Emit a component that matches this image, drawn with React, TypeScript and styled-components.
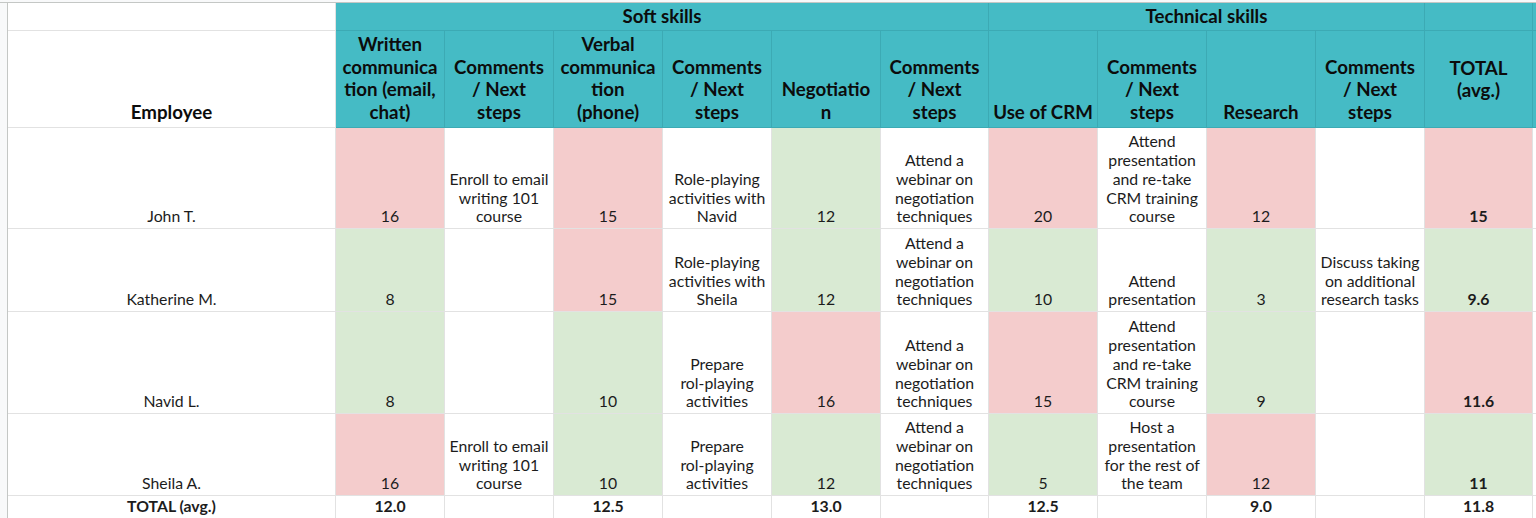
import React from "react";
import styled, { createGlobalStyle, css } from "styled-components";

const GlobalStyle = createGlobalStyle`
  html, body { margin: 0; padding: 0; background: #ffffff; overflow: hidden; }
  body { font-family: Lato, "Open Sans", "Liberation Sans", sans-serif; }
`;

const TEAL = "#45bbc5";
const TEAL_LINE = "#3caab4";
const GRID = "#e2e2e2";
const RED = "#f4cccc";
const GREEN = "#d9ead3";

type Tone = "teal" | "red" | "green" | "white";

const toneBg: Record<Tone, string> = {
  teal: TEAL,
  red: RED,
  green: GREEN,
  white: "#ffffff",
};

const Frame = styled.div`
  display: flex;
  flex-direction: column;
  width: 1536px;
  height: 518px;
  overflow: hidden;
`;

const TopStrip = styled.div`
  height: 2px;
  background: #f8f9fa;
  border-bottom: 1px solid #c4c7c5;
  flex: none;
`;

const Body = styled.div`
  display: flex;
  flex: 1;
  min-height: 0;
`;

const LeftStrip = styled.div`
  width: 7px;
  flex: none;
  background: #f8f9fa;
  border-right: 1px solid #c4c7c5;
`;

const Grid = styled.div`
  display: grid;
  grid-template-columns: 328px repeat(5, 109px) 108px repeat(4, 109px) 108px 60px;
  grid-template-rows: 28px 97px 101px 83px 102px 82px 23px;
  flex: none;
`;

const Cell = styled.div<{ $tone?: Tone; $span?: number; $head?: boolean; $bold?: boolean; $mid?: boolean }>`
  box-sizing: border-box;
  display: flex;
  flex-direction: column;
  justify-content: ${(p) => (p.$mid ? "center" : "flex-end")};
  align-items: center;
  text-align: center;
  padding: 0 3px ${(p) => (p.$mid ? "0" : p.$head ? "4px" : "2px")};
  background: ${(p) => toneBg[p.$tone ?? "white"]};
  border-right: 1px solid ${(p) => (p.$tone === "teal" ? TEAL_LINE : GRID)};
  border-bottom: 1px solid ${(p) => (p.$tone === "teal" ? TEAL_LINE : GRID)};
  overflow: hidden;
  overflow-wrap: anywhere;
  ${(p) => (p.$span ? css`grid-column: span ${p.$span};` : "")}
  ${(p) =>
    p.$head
      ? css`
          font-size: 18.7px;
          line-height: 22.5px;
          font-weight: 700;
          color: #0c0c0c;
        `
      : css`
          font-size: 15.8px;
          line-height: 18.7px;
          font-weight: ${p.$bold ? 700 : 400};
          color: #1c1c1c;
        `}
`;

const Line = styled.span`
  display: block;
  white-space: nowrap;
`;

const Word = styled.span`
  white-space: nowrap;
`;

function WrapText({ text }: { text: string }) {
  const words = text.split(" ");
  return (
    <span>
      {words.map((w, i) => (
        <React.Fragment key={i}>
          {i > 0 ? " " : null}
          {w.includes("-") ? <Word>{w}</Word> : w}
        </React.Fragment>
      ))}
    </span>
  );
}

type RowData = {
  name: string;
  cells: { v: string; tone?: Tone }[];
  total: { v: string; tone: Tone };
};

const rows: RowData[] = [
  {
    name: "John T.",
    cells: [
      { v: "16", tone: "red" },
      { v: "Enroll to email writing 101 course" },
      { v: "15", tone: "red" },
      { v: "Role-playing activities with Navid" },
      { v: "12", tone: "green" },
      { v: "Attend a webinar on negotiation techniques" },
      { v: "20", tone: "red" },
      { v: "Attend presentation and re-take CRM training course" },
      { v: "12", tone: "red" },
      { v: "" },
    ],
    total: { v: "15", tone: "red" },
  },
  {
    name: "Katherine M.",
    cells: [
      { v: "8", tone: "green" },
      { v: "" },
      { v: "15", tone: "red" },
      { v: "Role-playing activities with Sheila" },
      { v: "12", tone: "green" },
      { v: "Attend a webinar on negotiation techniques" },
      { v: "10", tone: "green" },
      { v: "Attend presentation" },
      { v: "3", tone: "green" },
      { v: "Discuss taking on additional research tasks" },
    ],
    total: { v: "9.6", tone: "green" },
  },
  {
    name: "Navid L.",
    cells: [
      { v: "8", tone: "green" },
      { v: "" },
      { v: "10", tone: "green" },
      { v: "Prepare rol-playing activities" },
      { v: "16", tone: "red" },
      { v: "Attend a webinar on negotiation techniques" },
      { v: "15", tone: "red" },
      { v: "Attend presentation and re-take CRM training course" },
      { v: "9", tone: "green" },
      { v: "" },
    ],
    total: { v: "11.6", tone: "red" },
  },
  {
    name: "Sheila A.",
    cells: [
      { v: "16", tone: "red" },
      { v: "Enroll to email writing 101 course" },
      { v: "10", tone: "green" },
      { v: "Prepare rol-playing activities" },
      { v: "12", tone: "green" },
      { v: "Attend a webinar on negotiation techniques" },
      { v: "5", tone: "green" },
      { v: "Host a presentation for the rest of the team" },
      { v: "12", tone: "red" },
      { v: "" },
    ],
    total: { v: "11", tone: "green" },
  },
];

const comments = ["Comments", "/ Next", "steps"];

const headers: { lines: string[]; mid?: boolean }[] = [
  { lines: ["Written", "communica", "tion (email,", "chat)"] },
  { lines: comments },
  { lines: ["Verbal", "communica", "tion", "(phone)"] },
  { lines: comments },
  { lines: ["Negotiatio", "n"] },
  { lines: comments },
  { lines: ["Use of CRM"] },
  { lines: comments },
  { lines: ["Research"] },
  { lines: comments },
  { lines: ["TOTAL", "(avg.)"], mid: true },
];

const totals = ["12.0", "", "12.5", "", "13.0", "", "12.5", "", "9.0", "", "11.8"];

export default function App() {
  return (
    <>
      <GlobalStyle />
      <Frame>
        <TopStrip />
        <Body>
          <LeftStrip />
          <Grid>
            <Cell />
            <Cell $tone="teal" $head $mid $span={6}>Soft skills</Cell>
            <Cell $tone="teal" $head $mid $span={4}>Technical skills</Cell>
            <Cell $tone="teal" $head $mid />
            <Cell $tone="teal" $head $mid />

            <Cell $head>Employee</Cell>
            {headers.map((h, i) => (
              <Cell key={i} $tone="teal" $head $mid={h.mid}>
                {h.lines.map((l, j) => (
                  <Line key={j}>{l}</Line>
                ))}
              </Cell>
            ))}
            <Cell $tone="teal" $head />

            {rows.map((r) => (
              <React.Fragment key={r.name}>
                <Cell>{r.name}</Cell>
                {r.cells.map((c, i) => (
                  <Cell key={i} $tone={c.tone}>
                    <WrapText text={c.v} />
                  </Cell>
                ))}
                <Cell $tone={r.total.tone} $bold>
                  {r.total.v}
                </Cell>
                <Cell />
              </React.Fragment>
            ))}

            <Cell $bold>TOTAL (avg.)</Cell>
            {totals.map((t, i) => (
              <Cell key={i} $bold>
                {t}
              </Cell>
            ))}
            <Cell />
          </Grid>
        </Body>
      </Frame>
    </>
  );
}
